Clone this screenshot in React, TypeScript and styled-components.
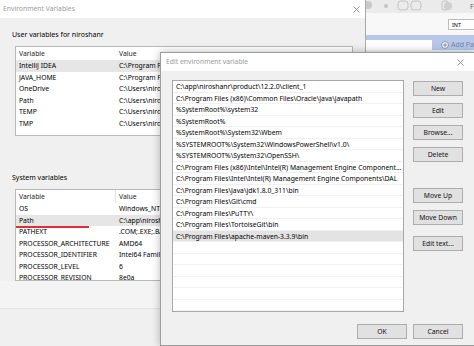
import styled, { createGlobalStyle } from 'styled-components';

const GlobalStyle = createGlobalStyle`
	html, body {
		margin: 0;
		padding: 0;
		background: #f0f0f0;
	}
	body {
		font-family: 'Noto Sans', 'Open Sans', sans-serif;
		font-size: 6.8px;
		color: #000;
	}
	* {
		box-sizing: border-box;
	}
`;

type TVar = { name: string; value: string; selected?: boolean; marked?: boolean };

const userVars: TVar[] = [
	{ name: 'IntelliJ IDEA', value: 'C:\\Program Files\\JetBrains\\IntelliJ IDEA', selected: true },
	{ name: 'JAVA_HOME', value: 'C:\\Program Files\\Java\\jdk1.8.0_311' },
	{ name: 'OneDrive', value: 'C:\\Users\\niroshanr\\OneDrive' },
	{ name: 'Path', value: 'C:\\Users\\niroshanr\\AppData\\Local' },
	{ name: 'TEMP', value: 'C:\\Users\\niroshanr\\AppData\\Local\\Temp' },
	{ name: 'TMP', value: 'C:\\Users\\niroshanr\\AppData\\Local\\Temp' },
];

const systemVars: TVar[] = [
	{ name: 'OS', value: 'Windows_NT' },
	{ name: 'Path', value: 'C:\\app\\niroshanr\\product\\12.2.0', selected: true, marked: true },
	{ name: 'PATHEXT', value: '.COM;.EXE;.BAT;.CMD;.VBS' },
	{ name: 'PROCESSOR_ARCHITECTURE', value: 'AMD64' },
	{ name: 'PROCESSOR_IDENTIFIER', value: 'Intel64 Family 6 Model 142' },
	{ name: 'PROCESSOR_LEVEL', value: '6' },
	{ name: 'PROCESSOR_REVISION', value: '8e0a' },
];

const paths = [
	'C:\\app\\niroshanr\\product\\12.2.0\\client_1',
	'C:\\Program Files (x86)\\Common Files\\Oracle\\Java\\javapath',
	'%SystemRoot%\\system32',
	'%SystemRoot%',
	'%SystemRoot%\\System32\\Wbem',
	'%SYSTEMROOT%\\System32\\WindowsPowerShell\\v1.0\\',
	'%SYSTEMROOT%\\System32\\OpenSSH\\',
	'C:\\Program Files (x86)\\Intel\\Intel(R) Management Engine Component...',
	'C:\\Program Files\\Intel\\Intel(R) Management Engine Components\\DAL',
	'C:\\Program Files\\Java\\jdk1.8.0_311\\bin',
	'C:\\Program Files\\Git\\cmd',
	'C:\\Program Files\\PuTTY\\',
	'C:\\Program Files\\TortoiseGit\\bin',
	'C:\\Program Files\\apache-maven-3.3.9\\bin',
	'',
	'',
	'',
	'',
	'',
	'',
];

const sideButtons = [
	{ label: 'New', extra: 0 },
	{ label: 'Edit', extra: 0 },
	{ label: 'Browse...', extra: 0 },
	{ label: 'Delete', extra: 0 },
	{ label: 'Move Up', extra: 19 },
	{ label: 'Move Down', extra: 0 },
	{ label: 'Edit text...', extra: 4 },
];

const CloseIcon = () => (
	<svg width="7" height="7" viewBox="0 0 7 7">
		<path d="M0.5 0.5 L6.5 6.5 M6.5 0.5 L0.5 6.5" stroke="#8a8a8a" strokeWidth="0.9" fill="none" />
	</svg>
);

const VarTable = ({ vars, divider, height }: { vars: TVar[]; divider?: boolean; height: number }) => (
	<TableBox $height={height}>
		<HeaderRow>
			<HeaderCell $divider={divider}>Variable</HeaderCell>
			<HeaderCell>Value</HeaderCell>
		</HeaderRow>
		{vars.map((v) => (
			<VarRow key={v.name} $selected={v.selected}>
				<Cell>{v.name}</Cell>
				<Cell>{v.value}</Cell>
				{v.marked && <Annotation />}
			</VarRow>
		))}
	</TableBox>
);

export default function App() {
	return (
		<>
			<GlobalStyle />
			<Screen>
				<EnvDialog>
					<TitleBar>
						<TitleText>Environment Variables</TitleText>
						<CloseIcon />
					</TitleBar>
					<EnvBody>
						<GroupLabel $top={11}>User variables for niroshanr</GroupLabel>
						<VarTable vars={userVars} height={90} />
						<GroupLabel $top={36}>System variables</GroupLabel>
						<VarTable vars={systemVars} divider height={92} />
						<BottomPanel />
					</EnvBody>
				</EnvDialog>

				<OtherApp>
					<IconStrip>
						<svg width="104" height="13" viewBox="0 0 104 13">
							<circle cx="2" cy="5" r="4" fill="#c9c9c9" />
							<circle cx="20" cy="6" r="2" fill="#c4c4c4" />
							<rect x="32" y="1" width="10" height="9" rx="3" fill="none" stroke="#c4c4c4" />
							<rect x="45" y="1" width="10" height="9" rx="3" fill="none" stroke="#c4c4c4" />
							<rect x="76" y="1" width="6" height="9" rx="2" fill="none" stroke="#c4c4c4" />
							<circle cx="82" cy="6" r="4" fill="#cfcfcf" />
						</svg>
						<StripText>F</StripText>
					</IconStrip>
					<Toolbar>
						<TypeBox>INT</TypeBox>
					</Toolbar>
					<BlueBar>
						<BlueField />
						<AddParam>
							<svg width="8" height="8" viewBox="0 0 8 8">
								<circle cx="4" cy="4" r="3.4" fill="#fff" stroke="#6d7fa6" strokeWidth="0.8" />
								<path d="M4 2 V6 M2 4 H6" stroke="#6d7fa6" strokeWidth="0.9" />
							</svg>
							Add Pa
						</AddParam>
					</BlueBar>
				</OtherApp>

				<EditDialog>
					<TitleBar>
						<TitleText>Edit environment variable</TitleText>
						<CloseIcon />
					</TitleBar>
					<EditBody>
						<ListBox>
							{paths.map((p, i) => (
								<PathRow key={i} $selected={i === 13}>
									{i === 13 ? <Marked>{p}</Marked> : p}
								</PathRow>
							))}
						</ListBox>
						<ButtonColumn>
							{sideButtons.map((b) => (
								<DialogButton key={b.label} $extra={b.extra}>
									{b.label}
								</DialogButton>
							))}
						</ButtonColumn>
						<Footer>
							<DialogButton>OK</DialogButton>
							<DialogButton>Cancel</DialogButton>
						</Footer>
					</EditBody>
				</EditDialog>
			</Screen>
		</>
	);
}

const Screen = styled.div`
	position: relative;
	display: flex;
	width: 474px;
	height: 346px;
	overflow: hidden;
	background: #f0f0f0;
`;

const EnvDialog = styled.div`
	display: flex;
	flex-direction: column;
	width: 366px;
	height: 346px;
	flex-shrink: 0;
	border-right: 1px solid #a9a9a9;
	background: #f0f0f0;
`;

const TitleBar = styled.div`
	display: flex;
	align-items: center;
	justify-content: space-between;
	height: 18px;
	padding: 0 5px 0 3px;
	background: #ffffff;
	flex-shrink: 0;
`;

const TitleText = styled.span`
	color: #9a9a9a;
	font-size: 6.8px;
	line-height: 1;
`;

const EnvBody = styled.div`
	display: flex;
	flex-direction: column;
	flex: 1;
	padding: 0 12px 0 15px;
`;

const GroupLabel = styled.div<{ $top: number }>`
	margin: ${(p) => p.$top}px 0 5px -3px;
	height: 12px;
	line-height: 12px;
	font-size: 7px;
	color: #000;
`;

const TableBox = styled.div<{ $height: number }>`
	position: relative;
	height: ${(p) => p.$height}px;
	background: #ffffff;
	border: 1px solid #b9b9b9;
	overflow: hidden;
`;

const HeaderRow = styled.div`
	display: grid;
	grid-template-columns: 100px 1fr;
	height: 13px;
	align-items: center;
`;

const HeaderCell = styled.div<{ $divider?: boolean }>`
	height: 100%;
	display: flex;
	align-items: center;
	padding-left: 3px;
	border-right: ${(p) => (p.$divider ? '1px solid #e2e2e2' : 'none')};
	color: #222;
`;

const VarRow = styled.div<{ $selected?: boolean }>`
	position: relative;
	display: grid;
	grid-template-columns: 100px 1fr;
	height: 11.5px;
	align-items: center;
	background: ${(p) => (p.$selected ? '#e6e6e6' : 'transparent')};
`;

const Cell = styled.div`
	padding-left: 3px;
	white-space: nowrap;
	overflow: hidden;
	line-height: 11.5px;
`;

const Annotation = styled.div`
	position: absolute;
	left: -5px;
	bottom: -2px;
	width: 78px;
	height: 2px;
	background: #d6323a;
`;

const BottomPanel = styled.div`
	margin: 0 -12px 0 -15px;
	height: 28px;
	border-bottom: 1px solid #e2e2e2;
	background: #f4f4f4;
`;

const OtherApp = styled.div`
	display: flex;
	flex-direction: column;
	width: 108px;
	flex-shrink: 0;
	background: #f0f0f0;
`;

const IconStrip = styled.div`
	display: flex;
	align-items: center;
	height: 13px;
	background: #ebebeb;
	overflow: hidden;
`;

const StripText = styled.span`
	color: #666;
	font-size: 7px;
`;

const Toolbar = styled.div`
	display: flex;
	align-items: center;
	height: 22px;
	padding-left: 82px;
	background: #f8f8f8;
`;

const TypeBox = styled.div`
	flex: 1;
	height: 11px;
	padding-left: 3px;
	font-size: 5.5px;
	line-height: 10px;
	background: #ffffff;
	border: 1px solid #bdbdbd;
	border-right: none;
`;

const BlueBar = styled.div`
	display: flex;
	align-items: flex-end;
	gap: 9px;
	height: 15px;
	background: #b8c8ea;
`;

const BlueField = styled.div`
	width: 67px;
	height: 10px;
	background: #ffffff;
`;

const AddParam = styled.div`
	display: flex;
	align-items: center;
	gap: 2px;
	padding-bottom: 1px;
	color: #7383a8;
	font-size: 7px;
	white-space: nowrap;
`;

const EditDialog = styled.div`
	position: absolute;
	left: 160px;
	top: 52px;
	width: 315px;
	height: 294px;
	display: flex;
	flex-direction: column;
	background: #f0f0f0;
	border: 1px solid #9c9c9c;
	box-shadow: 0 0 8px rgba(0, 0, 0, 0.28);

	${TitleBar} {
		height: 18px;
		padding: 0 10px 0 5px;
	}
`;

const EditBody = styled.div`
	display: grid;
	grid-template-columns: 232px 50px;
	grid-template-rows: auto auto;
	column-gap: 9px;
	padding: 9px 0 0 11px;
`;

const ListBox = styled.div`
	height: 232px;
	background: #ffffff;
	border: 1px solid #a8a8a8;
	overflow: hidden;
`;

const PathRow = styled.div<{ $selected?: boolean }>`
	height: 11.5px;
	line-height: 11px;
	padding-left: 3px;
	white-space: nowrap;
	overflow: hidden;
	border-bottom: 1px solid #f1f1f1;
	background: ${(p) => (p.$selected ? '#e3e3e3' : 'transparent')};
`;

const Marked = styled.span`
	display: inline-block;
	line-height: 9px;
	border-bottom: 2px solid #d6323a;
`;

const ButtonColumn = styled.div`
	display: flex;
	flex-direction: column;
	gap: 7px;
	padding-top: 1px;
`;

const DialogButton = styled.div<{ $extra?: number }>`
	display: flex;
	align-items: center;
	justify-content: center;
	width: 50px;
	height: 15px;
	margin-top: ${(p) => p.$extra ?? 0}px;
	background: #e1e1e1;
	border: 1px solid #adadad;
	color: #111;
	font-size: 6.8px;
	white-space: nowrap;
`;

const Footer = styled.div`
	grid-column: 1 / -1;
	display: flex;
	justify-content: flex-end;
	gap: 6px;
	margin-top: 12px;
`;
